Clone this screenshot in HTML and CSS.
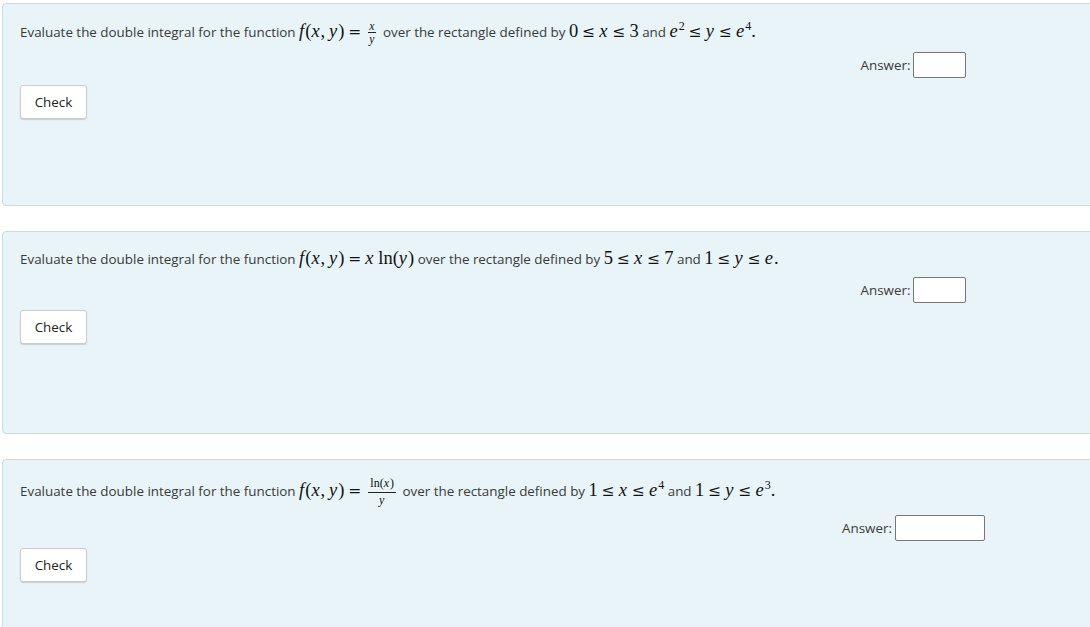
FILE: index.html
```html
<!DOCTYPE html>
<html lang="en">
<head>
    <meta charset="UTF-8">
    <title>Double integrals</title>
    <link rel="stylesheet" href="styles.css">
</head>
<body>
    <div class="quiz">
        <div class="que">
            <div class="qtext">
                Evaluate the double integral for the function
                <span class="math"><i>f</i>(<i>x</i>,&thinsp;<i>y</i>)<span class="op">=</span><span class="frac"><span class="num"><i>x</i></span><span class="den"><i>y</i></span></span></span>
                over the rectangle defined by
                <span class="math">0<span class="op">≤</span><i>x</i><span class="op">≤</span>3</span> and
                <span class="math"><i>e</i><sup>2</sup><span class="op">≤</span><i>y</i><span class="op">≤</span><i>e</i><sup>4</sup>.</span>
            </div>
            <div class="answer">
                <label>Answer:</label><input type="text" class="short">
            </div>
            <button class="check">Check</button>
        </div>

        <div class="que">
            <div class="qtext">
                Evaluate the double integral for the function
                <span class="math"><i>f</i>(<i>x</i>,&thinsp;<i>y</i>)<span class="op">=</span><i>x</i>&thinsp;ln(<i>y</i>)</span>
                over the rectangle defined by
                <span class="math">5<span class="op">≤</span><i>x</i><span class="op">≤</span>7</span> and
                <span class="math">1<span class="op">≤</span><i>y</i><span class="op">≤</span><i>e</i>.</span>
            </div>
            <div class="answer">
                <label>Answer:</label><input type="text" class="short">
            </div>
            <button class="check">Check</button>
        </div>

        <div class="que">
            <div class="qtext">
                Evaluate the double integral for the function
                <span class="math"><i>f</i>(<i>x</i>,&thinsp;<i>y</i>)<span class="op">=</span><span class="frac tall"><span class="num">ln(<i>x</i>)</span><span class="den"><i>y</i></span></span></span>
                over the rectangle defined by
                <span class="math">1<span class="op">≤</span><i>x</i><span class="op">≤</span><i>e</i><sup>4</sup></span> and
                <span class="math">1<span class="op">≤</span><i>y</i><span class="op">≤</span><i>e</i><sup>3</sup>.</span>
            </div>
            <div class="answer">
                <label>Answer:</label><input type="text" class="long">
            </div>
            <button class="check">Check</button>
        </div>
    </div>
</body>
</html>
```

FILE: styles.css
```css
body {
    margin: 0;
    font-family: "Open Sans", Arial, sans-serif;
    font-size: 13.4px;
    color: #3a3a3a;
    background: #fff;
    overflow: hidden;
}
.quiz {
    padding: 3px 0 0 2px;
    width: 1110px;
}
.que {
    box-sizing: border-box;
    height: 203px;
    margin-bottom: 25px;
    padding: 17px 17px 0 17px;
    background: #e8f4f7;
    border: 1px solid #bde0e6;
    border-radius: 4px;
}
.qtext {
    line-height: 20px;
}
.math {
    font-family: "Liberation Serif", "DejaVu Serif", serif;
    font-size: 18.5px;
    line-height: 16px;
    color: #111;
    white-space: nowrap;
}
.math i {
    margin-right: 1px;
}
.math .op {
    font-family: "DejaVu Serif", serif;
    font-size: 15.5px;
    margin: 0 4px;
}
.math sup {
    font-size: 12px;
    line-height: 0;
}
.frac {
    display: inline-flex;
    flex-direction: column;
    align-items: center;
    vertical-align: middle;
    font-size: 11.5px;
    line-height: 10px;
    margin: 0 3px;
}
.frac .num {
    border-bottom: 1px solid #222;
    padding: 0 1px 1px;
}
.frac .den {
    padding-top: 1px;
}
.frac.tall {
    font-size: 12px;
    line-height: 13px;
}
.frac.tall .num {
    padding: 0 2px 2px;
}
.answer {
    margin: 8px 0 7px 717px;
    width: 353px;
    text-align: center;
}
.answer label {
    margin-right: 3px;
    vertical-align: middle;
}
.answer input {
    box-sizing: border-box;
    height: 26px;
    border: 1px solid #777;
    border-radius: 2px;
    background: #fff;
    vertical-align: middle;
}
.short { width: 53px; }
.long { width: 90px; }
.check {
    font-family: "Open Sans", Arial, sans-serif;
    font-size: 13.4px;
    color: #222;
    background: #fff;
    border: 1px solid #ccc;
    border-radius: 3px;
    box-shadow: 0 1px 1px rgba(0, 0, 0, 0.15);
    padding: 0;
    height: 34px;
    width: 67px;
}
```
